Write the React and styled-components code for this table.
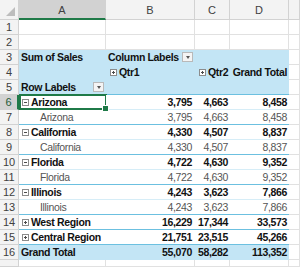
import React from "react";
import styled, { createGlobalStyle, css } from "styled-components";

const GlobalStyle = createGlobalStyle`
  html, body {
    margin: 0;
    padding: 0;
    background: #ffffff;
  }
  body {
    width: 300px;
    height: 267px;
    overflow: hidden;
  }
`;

const FONT = `"Liberation Sans", Arial, sans-serif`;
const BLUE = "#c3e5f5";
const BLUE_LINE = "#6cc0e0";
const PALE_LINE = "#d6edf7";
const GRID = "#e1e1e1";
const HEAD_LINE = "#d2d2d2";
const GREEN = "#1f7a48";

const Sheet = styled.div`
  display: grid;
  grid-template-columns: 19px 87px 89px 35px 59px 1fr;
  grid-template-rows: 20px repeat(16, 15px) 1fr;
  width: 300px;
  height: 267px;
  font-family: ${FONT};
  overflow: hidden;
`;

const Corner = styled.div`
  position: relative;
  background: #f3f3f3;
  border-right: 1px solid ${HEAD_LINE};
  border-bottom: 1px solid ${HEAD_LINE};
  box-sizing: border-box;
  &::after {
    content: "";
    position: absolute;
    right: 3px;
    bottom: 3px;
    border-style: solid;
    border-width: 0 0 9px 9px;
    border-color: transparent transparent #bdbdbd transparent;
  }
`;

const ColHeader = styled.div`
  display: flex;
  align-items: center;
  justify-content: center;
  box-sizing: border-box;
  font-size: 11px;
  color: #404040;
  border-right: 1px solid ${HEAD_LINE};
  background: ${(p) => (p.$selected ? "#d2d2d2" : "#f3f3f3")};
  border-bottom: ${(p) =>
    p.$selected ? `2px solid ${GREEN}` : `1px solid ${HEAD_LINE}`};
  padding-top: ${(p) => (p.$selected ? "1px" : "0")};
`;

const RowHeader = styled.div`
  display: flex;
  align-items: center;
  justify-content: center;
  box-sizing: border-box;
  font-size: 11px;
  border-bottom: 1px solid ${HEAD_LINE};
  background: ${(p) => (p.$selected ? "#d2d2d2" : "#f3f3f3")};
  border-right: ${(p) =>
    p.$selected ? `2px solid ${GREEN}` : `1px solid ${HEAD_LINE}`};
  color: ${(p) => (p.$selected ? "#1f5c3a" : "#404040")};
`;

const Cell = styled.div`
  position: relative;
  display: flex;
  align-items: center;
  box-sizing: border-box;
  min-width: 0;
  white-space: nowrap;
  font-size: 10.5px;
  letter-spacing: -0.35px;
  line-height: 14px;
  padding: 0 2px 0 2px;
  background: ${(p) => (p.$fill ? BLUE : "#ffffff")};
  justify-content: ${(p) => (p.$right ? "flex-end" : "flex-start")};
  font-weight: ${(p) => (p.$bold ? 700 : 400)};
  color: ${(p) => (p.$muted ? "#555555" : "#111111")};
  padding-left: ${(p) => p.$indent || 2}px;
  padding-right: ${(p) => p.$padRight || 2}px;
  border-bottom: 1px solid ${(p) => p.$line || "transparent"};
  ${(p) =>
    p.$grid &&
    css`
      border-right: 1px solid ${GRID};
      border-bottom: 1px solid ${GRID};
    `}
  ${(p) =>
    p.$selected &&
    css`
      &::after {
        content: "";
        position: absolute;
        left: 0;
        top: -1px;
        right: -1px;
        bottom: -1px;
        border: 2px solid ${GREEN};
        pointer-events: none;
      }
      &::before {
        content: "";
        position: absolute;
        right: -3px;
        bottom: -3px;
        width: 5px;
        height: 5px;
        background: ${GREEN};
        border: 1px solid #ffffff;
        z-index: 2;
      }
    `}
`;

const Toggle = styled.span`
  display: inline-flex;
  width: 7px;
  height: 7px;
  box-sizing: border-box;
  border: 1px solid #8c8c8c;
  background: #ffffff;
  margin-right: 2px;
  flex-shrink: 0;
  position: relative;
  &::before {
    content: "";
    position: absolute;
    left: 1px;
    right: 1px;
    top: 2px;
    height: 1px;
    background: #4d4d4d;
  }
  ${(p) =>
    p.$plus &&
    css`
      &::after {
        content: "";
        position: absolute;
        top: 1px;
        bottom: 1px;
        left: 2px;
        width: 1px;
        background: #4d4d4d;
      }
    `}
`;

const DropButton = styled.span`
  position: absolute;
  right: 2px;
  top: 2px;
  width: 11px;
  height: 10px;
  box-sizing: border-box;
  border: 1px solid #b9b9b9;
  background: #f4f4f4;
  display: flex;
  align-items: center;
  justify-content: center;
  &::after {
    content: "";
    border-style: solid;
    border-width: 3px 2.5px 0 2.5px;
    border-color: #555555 transparent transparent transparent;
  }
`;

const cols = ["A", "B", "C", "D"];

const rows = [
  { n: 1 },
  { n: 2 },
  { n: 3, kind: "head", a: "Sum of Sales", b: "Column Labels", bDrop: true },
  { n: 4, kind: "head", b: "Qtr1", c: "Qtr2", d: "Grand Total" },
  { n: 5, kind: "head", a: "Row Labels", aDrop: true, line: BLUE_LINE },
  { n: 6, kind: "parent", a: "Arizona", v: ["3,795", "4,663", "8,458"] },
  { n: 7, kind: "child", a: "Arizona", v: ["3,795", "4,663", "8,458"] },
  { n: 8, kind: "parent", a: "California", v: ["4,330", "4,507", "8,837"] },
  { n: 9, kind: "child", a: "California", v: ["4,330", "4,507", "8,837"] },
  { n: 10, kind: "parent", a: "Florida", v: ["4,722", "4,630", "9,352"] },
  { n: 11, kind: "child", a: "Florida", v: ["4,722", "4,630", "9,352"] },
  { n: 12, kind: "parent", a: "Illinois", v: ["4,243", "3,623", "7,866"] },
  { n: 13, kind: "child", a: "Illinois", v: ["4,243", "3,623", "7,866"] },
  { n: 14, kind: "collapsed", a: "West Region", v: ["16,229", "17,344", "33,573"] },
  { n: 15, kind: "collapsed", a: "Central Region", v: ["21,751", "23,515", "45,266"] },
  { n: 16, kind: "total", a: "Grand Total", v: ["55,070", "58,282", "113,352"] },
];

function lineFor(row) {
  if (row.line) return row.line;
  if (row.kind === "parent") return PALE_LINE;
  if (row.kind === "child" || row.kind === "collapsed") return BLUE_LINE;
  return undefined;
}

function PivotRow({ row }) {
  const line = lineFor(row);
  if (!row.kind) {
    return [0, 1, 2, 3].map((i) => <Cell key={i} $grid />);
  }
  if (row.kind === "head") {
    const quarters = row.n === 4;
    return (
      <>
        <Cell $fill $bold $line={line}>
          {row.a}
          {row.aDrop && <DropButton />}
        </Cell>
        <Cell $fill $bold $line={line} $indent={quarters ? 4 : 2}>
          {quarters && <Toggle $plus />}
          {row.b}
          {row.bDrop && <DropButton />}
        </Cell>
        <Cell $fill $bold $line={line} $indent={4}>
          {quarters && <Toggle $plus />}
          {row.c}
        </Cell>
        <Cell $fill $bold $line={line} $right>
          {row.d}
        </Cell>
      </>
    );
  }
  const child = row.kind === "child";
  const total = row.kind === "total";
  return (
    <>
      <Cell
        $fill={total}
        $bold={!child}
        $muted={child}
        $line={line}
        $indent={child ? 21 : total ? 2 : 3}
        $selected={row.n === 6}
      >
        {row.kind === "parent" && <Toggle />}
        {row.kind === "collapsed" && <Toggle $plus />}
        {row.a}
      </Cell>
      {row.v.map((val, i) => (
        <Cell
          key={i}
          $right
          $fill={total}
          $bold={!child}
          $muted={child}
          $line={line}
          $padRight={i === 0 ? 3 : 2}
        >
          {val}
        </Cell>
      ))}
    </>
  );
}

export default function App() {
  return (
    <>
      <GlobalStyle />
      <Sheet>
        <Corner />
        {cols.map((c) => (
          <ColHeader key={c} $selected={c === "A"}>
            {c}
          </ColHeader>
        ))}
        <ColHeader />
        {rows.map((row) => (
          <React.Fragment key={row.n}>
            <RowHeader $selected={row.n === 6}>{row.n}</RowHeader>
            <PivotRow row={row} />
            <Cell $grid />
          </React.Fragment>
        ))}
        <RowHeader />
        {[0, 1, 2, 3, 4].map((i) => (
          <Cell key={i} $grid />
        ))}
      </Sheet>
    </>
  );
}
